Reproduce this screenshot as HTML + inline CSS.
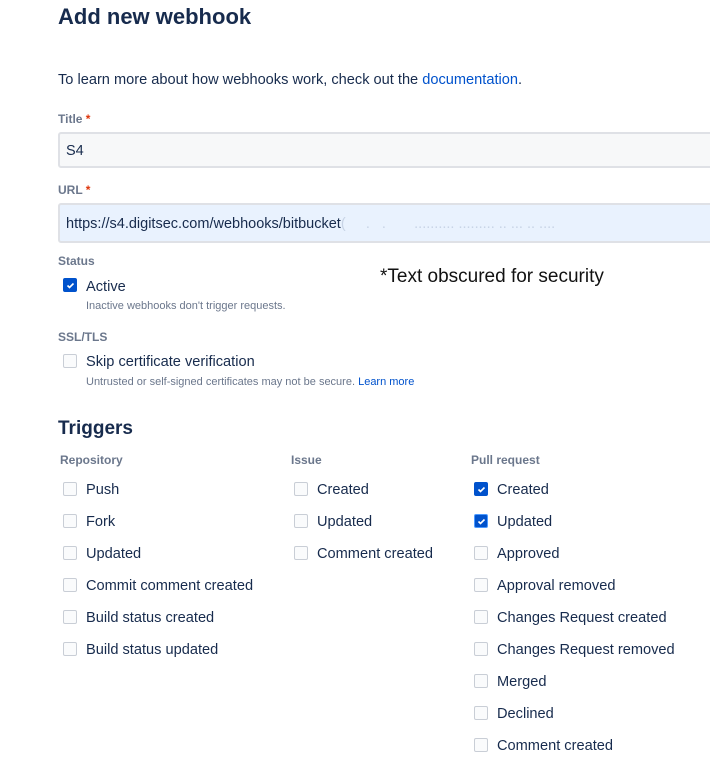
<!DOCTYPE html>
<html><head><style>
body{margin:0;width:710px;height:767px;background:#fff;font-family:"Liberation Sans",sans-serif;color:#172b4d;position:relative;overflow:hidden}
.a{position:absolute;white-space:nowrap}
h1{position:absolute;left:58px;top:4px;margin:0;font-size:22px;font-weight:bold;color:#172b4d}
.lbl{font-size:12px;font-weight:bold;color:#6b778c}
.req{color:#de350b}
.inp{position:absolute;left:58px;width:680px;height:36px;border:2px solid #dfe1e6;border-radius:3px;box-sizing:border-box;font-size:14.5px;line-height:34px;padding-left:6px}
.cb{position:absolute;width:12px;height:12px;border:1px solid #c9ced6;border-radius:2px;background:#fafbfc;margin:-1px 0 0 -1px}
.cb.on{background:#0052cc;border-color:#0052cc}
.cb.on2{background:#0052cc;border:1px solid #4c9aff}
.cb svg{position:absolute;left:1.5px;top:1.5px}
.t{font-size:14.6px;margin-top:1px}
</style></head><body>
<h1>Add new webhook</h1>
<div class="a t" style="left:58px;top:71px">To learn more about how webhooks work, check out the <span style="color:#0052cc">documentation</span>.</div>
<div class="a lbl" style="left:58px;top:112px">Title<span class="req"> *</span></div>
<div class="inp" style="top:132px;background:#f7f8f9">S4</div>
<div class="a lbl" style="left:58px;top:183px">URL<span class="req"> *</span></div>
<div class="inp" style="top:203px;height:40px;line-height:38px;background:#e9f2fe;border-color:#dfe1e6">https://s4.digitsec.com/webhooks/bitbucket<span style="color:#c8d4e6">( &nbsp; &nbsp; . &nbsp; . &nbsp; &nbsp; &nbsp; ..........  ......... .. ... .. ....</span></div>
<div class="a lbl" style="left:58px;top:254px">Status</div>
<div class="a" style="left:380px;top:266px;font-size:19px;color:#111;font-family:'Liberation Sans',sans-serif">*Text obscured for security</div>

<div class="cb on" style="left:64px;top:279px"><svg width="9" height="9" viewBox="0 0 9 9"><path d="M1.5 4.5l2 2 4-4" stroke="#fff" stroke-width="1.6" fill="none"/></svg></div>
<div class="a t" style="left:86px;top:278px">Active</div>
<div class="a" style="left:86px;top:300px;font-size:11px;color:#6b778c">Inactive webhooks don't trigger requests.</div>
<div class="a lbl" style="left:58px;top:330px">SSL/TLS</div>
<div class="cb" style="left:64px;top:355px"></div>
<div class="a t" style="left:86px;top:353px">Skip certificate verification</div>
<div class="a" style="left:86px;top:376px;font-size:11px;color:#6b778c">Untrusted or self-signed certificates may not be secure. <span style="color:#0052cc">Learn more</span></div>
<div class="a" style="left:58px;top:418px;font-size:19px;font-weight:bold">Triggers</div>
<div class="a lbl" style="left:60px;top:453px">Repository</div>
<div class="a lbl" style="left:291px;top:453px">Issue</div>
<div class="a lbl" style="left:471px;top:453px">Pull request</div>

<div class="cb" style="left:64px;top:483px"></div><div class="a t" style="left:86px;top:481px">Push</div>
<div class="cb" style="left:64px;top:515px"></div><div class="a t" style="left:86px;top:513px">Fork</div>
<div class="cb" style="left:64px;top:547px"></div><div class="a t" style="left:86px;top:545px">Updated</div>
<div class="cb" style="left:64px;top:579px"></div><div class="a t" style="left:86px;top:577px">Commit comment created</div>
<div class="cb" style="left:64px;top:611px"></div><div class="a t" style="left:86px;top:609px">Build status created</div>
<div class="cb" style="left:64px;top:643px"></div><div class="a t" style="left:86px;top:641px">Build status updated</div>

<div class="cb" style="left:295px;top:483px"></div><div class="a t" style="left:317px;top:481px">Created</div>
<div class="cb" style="left:295px;top:515px"></div><div class="a t" style="left:317px;top:513px">Updated</div>
<div class="cb" style="left:295px;top:547px"></div><div class="a t" style="left:317px;top:545px">Comment created</div>

<div class="cb on" style="left:475px;top:483px"><svg width="9" height="9" viewBox="0 0 9 9"><path d="M1.5 4.5l2 2 4-4" stroke="#fff" stroke-width="1.6" fill="none"/></svg></div><div class="a t" style="left:497px;top:481px">Created</div>
<div class="cb on2" style="left:475px;top:515px"><svg width="9" height="9" viewBox="0 0 9 9"><path d="M1.5 4.5l2 2 4-4" stroke="#fff" stroke-width="1.6" fill="none"/></svg></div><div class="a t" style="left:497px;top:513px">Updated</div>
<div class="cb" style="left:475px;top:547px"></div><div class="a t" style="left:497px;top:545px">Approved</div>
<div class="cb" style="left:475px;top:579px"></div><div class="a t" style="left:497px;top:577px">Approval removed</div>
<div class="cb" style="left:475px;top:611px"></div><div class="a t" style="left:497px;top:609px">Changes Request created</div>
<div class="cb" style="left:475px;top:643px"></div><div class="a t" style="left:497px;top:641px">Changes Request removed</div>
<div class="cb" style="left:475px;top:675px"></div><div class="a t" style="left:497px;top:673px">Merged</div>
<div class="cb" style="left:475px;top:707px"></div><div class="a t" style="left:497px;top:705px">Declined</div>
<div class="cb" style="left:475px;top:739px"></div><div class="a t" style="left:497px;top:737px">Comment created</div>
</body></html>
